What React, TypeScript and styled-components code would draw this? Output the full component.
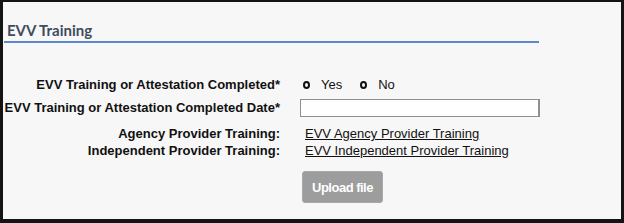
import React from "react";
import styled, { createGlobalStyle } from "styled-components";

const Global = createGlobalStyle`
  html, body { margin: 0; padding: 0; background: #f7f7f7; }
  body { font-family: "Liberation Sans", Arial, sans-serif; }
`;

const Frame = styled.div`
  box-sizing: border-box;
  width: 624px;
  height: 223px;
  border-style: solid;
  border-color: #141414;
  border-width: 2px 3px 4px 3px;
  background: #f7f7f7;
  padding: 0 0 0 1px;
`;

const Section = styled.section`
  width: 535px;
`;

const Heading = styled.h2`
  margin: 0;
  padding: 18px 0 1px 3px;
  font-family: Lato, "Open Sans", sans-serif;
  font-weight: 700;
  font-size: 15px;
  line-height: 20px;
  color: #3e4c5c;
  border-bottom: 2px solid #5b88cc;
`;

const Form = styled.div`
  display: grid;
  grid-template-columns: 276px 1fr;
  column-gap: 20px;
  align-items: center;
  padding-top: 30px;
`;

const Label = styled.div<{ $tight?: boolean; $gap?: number }>`
  text-align: right;
  font-weight: 700;
  font-size: 13px;
  color: #111;
  line-height: ${(p) => (p.$tight ? "17px" : "23px")};
  padding-top: ${(p) => p.$gap ?? 0}px;
`;

const Value = styled.div<{ $tight?: boolean; $gap?: number }>`
  font-size: 13px;
  color: #111;
  line-height: ${(p) => (p.$tight ? "17px" : "23px")};
  padding-top: ${(p) => p.$gap ?? 0}px;
  display: flex;
  align-items: center;
`;

const Radio = styled.label`
  display: inline-flex;
  align-items: center;
  margin-left: 3px;
  margin-right: 15px;
`;

const Dot = styled.span`
  box-sizing: border-box;
  display: inline-block;
  width: 7px;
  height: 8px;
  border: 2px solid #111;
  border-radius: 50%;
  margin-right: 11px;
`;

const TextInput = styled.input`
  box-sizing: border-box;
  width: 240px;
  height: 18px;
  border: 1px solid #8f8f8f;
  border-right-width: 2px;
  background: #fff;
  padding: 0;
  margin: 0;
`;

const Link = styled.a`
  color: #111;
  text-decoration: underline;
  margin-left: 5px;
`;

const ButtonRow = styled.div`
  grid-column: 2;
  padding-top: 12px;
`;

const UploadButton = styled.button`
  width: 81px;
  height: 32px;
  margin-left: 2px;
  border: 1px solid #a8a8a8;
  border-radius: 3px;
  background: #9d9d9d;
  color: #fff;
  font-family: "Liberation Sans", Arial, sans-serif;
  font-weight: 700;
  font-size: 13px;
  padding: 0;
  letter-spacing: -0.5px;
  white-space: nowrap;
`;

export default function App() {
  return (
    <>
      <Global />
      <Frame>
        <Section>
          <Heading>EVV Training</Heading>
          <Form>
            <Label>EVV Training or Attestation Completed*</Label>
            <Value>
              <Radio>
                <Dot />
                Yes
              </Radio>
              <Radio>
                <Dot />
                No
              </Radio>
            </Value>
            <Label>EVV Training or Attestation Completed Date*</Label>
            <Value>
              <TextInput type="text" />
            </Value>
            <Label $tight $gap={6}>Agency Provider Training:</Label>
            <Value $tight $gap={6}>
              <Link href="#">EVV Agency Provider Training</Link>
            </Value>
            <Label $tight>Independent Provider Training:</Label>
            <Value $tight>
              <Link href="#">EVV Independent Provider Training</Link>
            </Value>
            <ButtonRow>
              <UploadButton>Upload file</UploadButton>
            </ButtonRow>
          </Form>
        </Section>
      </Frame>
    </>
  );
}
